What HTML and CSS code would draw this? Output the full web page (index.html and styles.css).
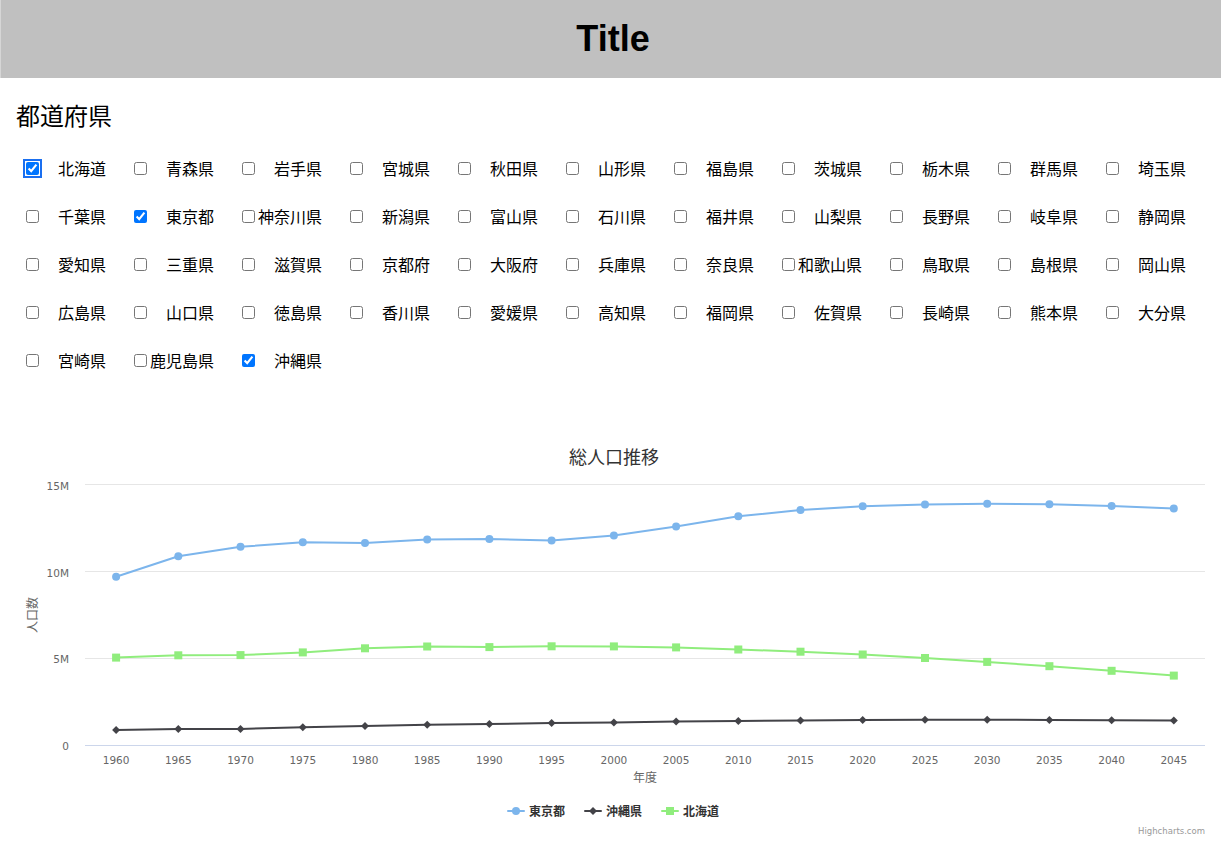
FILE: index.html
```html
<!DOCTYPE html>
<html lang="ja">
<head>
<meta charset="utf-8">
<title>Title</title>
<link rel="stylesheet" href="styles.css">
</head>
<body>
<header class="top-bar"><h1 class="top-title">Title</h1></header>
<main class="content">
  <h2 class="pref-heading">都道府県</h2>
  <div class="pref-grid">
    <label class="pref-item"><input type="checkbox" class="focused" checked>北海道</label>
    <label class="pref-item"><input type="checkbox">青森県</label>
    <label class="pref-item"><input type="checkbox">岩手県</label>
    <label class="pref-item"><input type="checkbox">宮城県</label>
    <label class="pref-item"><input type="checkbox">秋田県</label>
    <label class="pref-item"><input type="checkbox">山形県</label>
    <label class="pref-item"><input type="checkbox">福島県</label>
    <label class="pref-item"><input type="checkbox">茨城県</label>
    <label class="pref-item"><input type="checkbox">栃木県</label>
    <label class="pref-item"><input type="checkbox">群馬県</label>
    <label class="pref-item"><input type="checkbox">埼玉県</label>
    <label class="pref-item"><input type="checkbox">千葉県</label>
    <label class="pref-item"><input type="checkbox" checked>東京都</label>
    <label class="pref-item"><input type="checkbox">神奈川県</label>
    <label class="pref-item"><input type="checkbox">新潟県</label>
    <label class="pref-item"><input type="checkbox">富山県</label>
    <label class="pref-item"><input type="checkbox">石川県</label>
    <label class="pref-item"><input type="checkbox">福井県</label>
    <label class="pref-item"><input type="checkbox">山梨県</label>
    <label class="pref-item"><input type="checkbox">長野県</label>
    <label class="pref-item"><input type="checkbox">岐阜県</label>
    <label class="pref-item"><input type="checkbox">静岡県</label>
    <label class="pref-item"><input type="checkbox">愛知県</label>
    <label class="pref-item"><input type="checkbox">三重県</label>
    <label class="pref-item"><input type="checkbox">滋賀県</label>
    <label class="pref-item"><input type="checkbox">京都府</label>
    <label class="pref-item"><input type="checkbox">大阪府</label>
    <label class="pref-item"><input type="checkbox">兵庫県</label>
    <label class="pref-item"><input type="checkbox">奈良県</label>
    <label class="pref-item"><input type="checkbox">和歌山県</label>
    <label class="pref-item"><input type="checkbox">鳥取県</label>
    <label class="pref-item"><input type="checkbox">島根県</label>
    <label class="pref-item"><input type="checkbox">岡山県</label>
    <label class="pref-item"><input type="checkbox">広島県</label>
    <label class="pref-item"><input type="checkbox">山口県</label>
    <label class="pref-item"><input type="checkbox">徳島県</label>
    <label class="pref-item"><input type="checkbox">香川県</label>
    <label class="pref-item"><input type="checkbox">愛媛県</label>
    <label class="pref-item"><input type="checkbox">高知県</label>
    <label class="pref-item"><input type="checkbox">福岡県</label>
    <label class="pref-item"><input type="checkbox">佐賀県</label>
    <label class="pref-item"><input type="checkbox">長崎県</label>
    <label class="pref-item"><input type="checkbox">熊本県</label>
    <label class="pref-item"><input type="checkbox">大分県</label>
    <label class="pref-item"><input type="checkbox">宮崎県</label>
    <label class="pref-item"><input type="checkbox">鹿児島県</label>
    <label class="pref-item"><input type="checkbox" checked>沖縄県</label>
  </div>
</main>
<section class="chart">
<svg class="chart-svg" width="1221" height="410" viewBox="0 431 1221 410" xmlns="http://www.w3.org/2000/svg">
  <defs>
    <radialGradient id="shade" cx="0.5" cy="1" r="0.5">
      <stop offset="0" stop-color="#ececec"/>
      <stop offset="1" stop-color="#ffffff" stop-opacity="0"/>
    </radialGradient>
  </defs>
  <rect x="0" y="431" width="1221" height="410" fill="#ffffff"/>
  <ellipse cx="1050" cy="852" rx="440" ry="30" fill="url(#shade)"/>
  <text class="c-title" x="614" y="464" text-anchor="middle">総人口推移</text>

  <g class="grid">
    <line x1="85" y1="484.5" x2="1205" y2="484.5"/>
    <line x1="85" y1="571.5" x2="1205" y2="571.5"/>
    <line x1="85" y1="658.5" x2="1205" y2="658.5"/>
  </g>
  <line class="x-axis" x1="85" y1="745.5" x2="1205" y2="745.5"/>

  <g class="y-labels" text-anchor="end">
    <text x="69" y="490">15M</text>
    <text x="69" y="577">10M</text>
    <text x="69" y="663">5M</text>
    <text x="69" y="750">0</text>
  </g>
  <text class="axis-title" transform="translate(37,615) rotate(-90)" text-anchor="middle">人口数</text>

  <g class="x-labels" text-anchor="middle">
    <text x="116.1" y="764">1960</text>
    <text x="178.3" y="764">1965</text>
    <text x="240.5" y="764">1970</text>
    <text x="302.8" y="764">1975</text>
    <text x="365.0" y="764">1980</text>
    <text x="427.2" y="764">1985</text>
    <text x="489.4" y="764">1990</text>
    <text x="551.6" y="764">1995</text>
    <text x="613.9" y="764">2000</text>
    <text x="676.1" y="764">2005</text>
    <text x="738.3" y="764">2010</text>
    <text x="800.5" y="764">2015</text>
    <text x="862.7" y="764">2020</text>
    <text x="925.0" y="764">2025</text>
    <text x="987.2" y="764">2030</text>
    <text x="1049.4" y="764">2035</text>
    <text x="1111.6" y="764">2040</text>
    <text x="1173.8" y="764">2045</text>
  </g>
  <text class="axis-title" x="645" y="782" text-anchor="middle">年度</text>

  <!-- 東京都 -->
  <polyline class="s-tokyo" points="116.1,576.8 178.3,556.2 240.5,546.8 302.8,542.2 365.0,543.1 427.2,539.5 489.4,539.0 551.6,540.4 613.9,535.4 676.1,526.5 738.3,516.3 800.5,510.1 862.7,506.3 925.0,504.4 987.2,503.7 1049.4,504.3 1111.6,505.9 1173.8,508.5"/>
  <g class="m-tokyo">
    <circle cx="116.1" cy="576.8" r="4"/><circle cx="178.3" cy="556.2" r="4"/><circle cx="240.5" cy="546.8" r="4"/>
    <circle cx="302.8" cy="542.2" r="4"/><circle cx="365.0" cy="543.1" r="4"/><circle cx="427.2" cy="539.5" r="4"/>
    <circle cx="489.4" cy="539.0" r="4"/><circle cx="551.6" cy="540.4" r="4"/><circle cx="613.9" cy="535.4" r="4"/>
    <circle cx="676.1" cy="526.5" r="4"/><circle cx="738.3" cy="516.3" r="4"/><circle cx="800.5" cy="510.1" r="4"/>
    <circle cx="862.7" cy="506.3" r="4"/><circle cx="925.0" cy="504.4" r="4"/><circle cx="987.2" cy="503.7" r="4"/>
    <circle cx="1049.4" cy="504.3" r="4"/><circle cx="1111.6" cy="505.9" r="4"/><circle cx="1173.8" cy="508.5" r="4"/>
  </g>

  <!-- 沖縄県 -->
  <polyline class="s-okinawa" points="116.1,729.9 178.3,729.0 240.5,728.9 302.8,727.2 365.0,726.0 427.2,724.8 489.4,724.0 551.6,723.1 613.9,722.4 676.1,721.6 738.3,721.1 800.5,720.4 862.7,719.9 925.0,719.7 987.2,719.7 1049.4,719.9 1111.6,720.2 1173.8,720.6"/>
  <g class="m-okinawa">
    <path d="M116.1 725.9l4 4l-4 4l-4 -4z"/><path d="M178.3 725.0l4 4l-4 4l-4 -4z"/><path d="M240.5 724.9l4 4l-4 4l-4 -4z"/>
    <path d="M302.8 723.2l4 4l-4 4l-4 -4z"/><path d="M365.0 722.0l4 4l-4 4l-4 -4z"/><path d="M427.2 720.8l4 4l-4 4l-4 -4z"/>
    <path d="M489.4 720.0l4 4l-4 4l-4 -4z"/><path d="M551.6 719.1l4 4l-4 4l-4 -4z"/><path d="M613.9 718.4l4 4l-4 4l-4 -4z"/>
    <path d="M676.1 717.6l4 4l-4 4l-4 -4z"/><path d="M738.3 717.1l4 4l-4 4l-4 -4z"/><path d="M800.5 716.4l4 4l-4 4l-4 -4z"/>
    <path d="M862.7 715.9l4 4l-4 4l-4 -4z"/><path d="M925.0 715.7l4 4l-4 4l-4 -4z"/><path d="M987.2 715.7l4 4l-4 4l-4 -4z"/>
    <path d="M1049.4 715.9l4 4l-4 4l-4 -4z"/><path d="M1111.6 716.2l4 4l-4 4l-4 -4z"/><path d="M1173.8 716.6l4 4l-4 4l-4 -4z"/>
  </g>

  <!-- 北海道 -->
  <polyline class="s-hokkaido" points="116.1,657.6 178.3,655.3 240.5,655.1 302.8,652.4 365.0,648.3 427.2,646.5 489.4,647.1 551.6,646.3 613.9,646.4 676.1,647.4 738.3,649.5 800.5,651.7 862.7,654.5 925.0,658.0 987.2,661.9 1049.4,666.2 1111.6,670.8 1173.8,675.6"/>
  <g class="m-hokkaido">
    <rect x="112.1" y="653.6" width="8" height="8"/><rect x="174.3" y="651.3" width="8" height="8"/><rect x="236.5" y="651.1" width="8" height="8"/>
    <rect x="298.8" y="648.4" width="8" height="8"/><rect x="361.0" y="644.3" width="8" height="8"/><rect x="423.2" y="642.5" width="8" height="8"/>
    <rect x="485.4" y="643.1" width="8" height="8"/><rect x="547.6" y="642.3" width="8" height="8"/><rect x="609.9" y="642.4" width="8" height="8"/>
    <rect x="672.1" y="643.4" width="8" height="8"/><rect x="734.3" y="645.5" width="8" height="8"/><rect x="796.5" y="647.7" width="8" height="8"/>
    <rect x="858.7" y="650.5" width="8" height="8"/><rect x="921.0" y="654.0" width="8" height="8"/><rect x="983.2" y="657.9" width="8" height="8"/>
    <rect x="1045.4" y="662.2" width="8" height="8"/><rect x="1107.6" y="666.8" width="8" height="8"/><rect x="1169.8" y="671.6" width="8" height="8"/>
  </g>

  <!-- legend -->
  <g class="legend">
    <line class="s-tokyo" x1="508" y1="811" x2="524" y2="811"/>
    <circle class="m-tokyo" cx="516" cy="811" r="4"/>
    <text x="529" y="815.6">東京都</text>
    <line class="s-okinawa" x1="585" y1="811" x2="601" y2="811"/>
    <path class="m-okinawa" d="M593 807l4 4l-4 4l-4 -4z"/>
    <text x="606" y="815.6">沖縄県</text>
    <line class="s-hokkaido" x1="662" y1="811" x2="678" y2="811"/>
    <rect class="m-hokkaido" x="666" y="807" width="8" height="8"/>
    <text x="683" y="815.6">北海道</text>
  </g>

  <text class="credits" x="1205" y="834" text-anchor="end">Highcharts.com</text>
</svg>
</section>
</body>
</html>
```

FILE: styles.css
```css
html, body {
  margin: 0;
  padding: 0;
  background: #ffffff;
}
body {
  font-family: "Noto Sans CJK JP", "Noto Sans", sans-serif;
  color: #000000;
  overflow: hidden;
}
.top-bar {
  height: 78px;
  background: #c0c0c0;
  border-left: 1px solid #d6d6d6;
  padding-left: 4px;
  display: flex;
  align-items: center;
  justify-content: center;
}
.top-title {
  margin: 0;
  font-family: "Liberation Sans", Arial, sans-serif;
  font-weight: bold;
  font-size: 36px;
  line-height: 78px;
  color: #000000;
}
.content {
  padding: 0 0 0 16px;
}
.pref-heading {
  margin: 21px 0 0 0;
  font-size: 24px;
  font-weight: normal;
  line-height: 32px;
  height: 32px;
}
.pref-grid {
  margin: 13px 0 0 6px;
  display: grid;
  grid-template-columns: repeat(11, 84px);
  column-gap: 24px;
  grid-auto-rows: 48px;
}
.pref-item {
  display: flex;
  align-items: center;
  justify-content: space-between;
  font-size: 16px;
  line-height: 20px;
  white-space: nowrap;
}
.pref-item input {
  margin: 3px 3px 3px 4px;
  width: 13px;
  height: 13px;
  flex: none;
}
.pref-item input.focused {
  outline: 2px solid #1a6ff0;
  outline-offset: 1px;
  border-radius: 2px;
}
.chart {
  margin-top: 47px;
  height: 410px;
}
.chart-svg {
  display: block;
  font-family: "DejaVu Sans", "Noto Sans CJK JP", sans-serif;
}
.c-title {
  font-family: "Noto Sans CJK JP", sans-serif;
  font-size: 18px;
  fill: #333333;
}
.grid line {
  stroke: #e6e6e6;
  stroke-width: 1;
}
.x-axis {
  stroke: #ccd6eb;
  stroke-width: 1;
}
.y-labels text,
.x-labels text {
  font-size: 10.5px;
  fill: #666666;
}
.axis-title {
  font-family: "Noto Sans CJK JP", sans-serif;
  font-size: 12px;
  fill: #666666;
}
.s-tokyo, .s-okinawa, .s-hokkaido {
  fill: none;
  stroke-width: 2;
  stroke-linejoin: round;
  stroke-linecap: round;
}
.s-tokyo { stroke: #7cb5ec; }
.s-okinawa { stroke: #434348; }
.s-hokkaido { stroke: #90ed7d; }
.m-tokyo { fill: #7cb5ec; }
.m-okinawa { fill: #434348; }
.m-hokkaido { fill: #90ed7d; }
.legend text {
  font-family: "Noto Sans CJK JP", sans-serif;
  font-size: 12px;
  font-weight: bold;
  fill: #333333;
}
.credits {
  font-size: 8.5px;
  fill: #999999;
}
```
